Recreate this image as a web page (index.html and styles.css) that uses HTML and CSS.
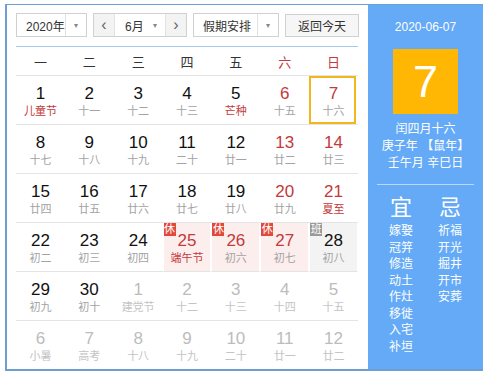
FILE: index.html
```html
<!DOCTYPE html>
<html lang="zh">
<head>
<meta charset="utf-8">
<link rel="stylesheet" href="styles.css">
</head>
<body>
<div class="cal">
  <div class="main">
    <div class="toolbar">
      <div class="sel year"><span class="sel-text">2020年</span><span class="caret">&#9662;</span></div>
      <div class="month-group">
        <span class="nav">&lsaquo;</span>
        <div class="sel month"><span class="sel-text">6月</span><span class="caret">&#9662;</span></div>
        <span class="nav">&rsaquo;</span>
      </div>
      <div class="sel holiday"><span class="sel-text">假期安排</span><span class="caret">&#9662;</span></div>
      <button class="today-btn">返回今天</button>
    </div>
    <div class="weekdays">
      <span>一</span><span>二</span><span>三</span><span>四</span><span>五</span><span class="wk">六</span><span class="wk">日</span>
    </div>
    <div class="grid">
      <div class="day"><b>1</b><i class="fest">儿童节</i></div>
      <div class="day"><b>2</b><i>十一</i></div>
      <div class="day"><b>3</b><i>十二</i></div>
      <div class="day"><b>4</b><i>十三</i></div>
      <div class="day"><b>5</b><i class="fest">芒种</i></div>
      <div class="day wk"><b>6</b><i>十五</i></div>
      <div class="day wk today"><b>7</b><i>十六</i></div>

      <div class="day"><b>8</b><i>十七</i></div>
      <div class="day"><b>9</b><i>十八</i></div>
      <div class="day"><b>10</b><i>十九</i></div>
      <div class="day"><b>11</b><i>二十</i></div>
      <div class="day"><b>12</b><i>廿一</i></div>
      <div class="day wk"><b>13</b><i>廿二</i></div>
      <div class="day wk"><b>14</b><i>廿三</i></div>

      <div class="day"><b>15</b><i>廿四</i></div>
      <div class="day"><b>16</b><i>廿五</i></div>
      <div class="day"><b>17</b><i>廿六</i></div>
      <div class="day"><b>18</b><i>廿七</i></div>
      <div class="day"><b>19</b><i>廿八</i></div>
      <div class="day wk"><b>20</b><i>廿九</i></div>
      <div class="day wk"><b>21</b><i class="fest">夏至</i></div>

      <div class="day"><b>22</b><i>初二</i></div>
      <div class="day"><b>23</b><i>初三</i></div>
      <div class="day"><b>24</b><i>初四</i></div>
      <div class="day rest"><span class="badge">休</span><b>25</b><i class="fest">端午节</i></div>
      <div class="day rest"><span class="badge">休</span><b>26</b><i>初六</i></div>
      <div class="day rest"><span class="badge">休</span><b>27</b><i>初七</i></div>
      <div class="day work"><span class="badge">班</span><b>28</b><i>初八</i></div>

      <div class="day"><b>29</b><i>初九</i></div>
      <div class="day"><b>30</b><i>初十</i></div>
      <div class="day other"><b>1</b><i>建党节</i></div>
      <div class="day other"><b>2</b><i>十二</i></div>
      <div class="day other"><b>3</b><i>十三</i></div>
      <div class="day other"><b>4</b><i>十四</i></div>
      <div class="day other"><b>5</b><i>十五</i></div>

      <div class="day other"><b>6</b><i>小暑</i></div>
      <div class="day other"><b>7</b><i>高考</i></div>
      <div class="day other"><b>8</b><i>十八</i></div>
      <div class="day other"><b>9</b><i>十九</i></div>
      <div class="day other"><b>10</b><i>二十</i></div>
      <div class="day other"><b>11</b><i>廿一</i></div>
      <div class="day other"><b>12</b><i>廿二</i></div>
    </div>
  </div>
  <aside class="side">
    <div class="side-date">2020-06-07</div>
    <div class="big-day">7</div>
    <div class="lunar">
      <div>闰四月十六</div>
      <div>庚子年 【鼠年】</div>
      <div>壬午月 辛巳日</div>
    </div>
    <div class="sep"></div>
    <div class="yiji">
      <div class="col">
        <div class="head">宜</div>
        <div>嫁娶</div><div>冠笄</div><div>修造</div><div>动土</div><div>作灶</div><div>移徙</div><div>入宅</div><div>补垣</div>
      </div>
      <div class="col">
        <div class="head">忌</div>
        <div>祈福</div><div>开光</div><div>掘井</div><div>开市</div><div>安葬</div>
      </div>
    </div>
  </aside>
</div>
</body>
</html>
```

FILE: styles.css
```css
* { box-sizing: border-box; }
html, body { margin: 0; padding: 0; background: #fff; }
body {
  font-family: "Liberation Sans", "Noto Sans CJK SC", sans-serif;
  color: #222;
}
.cal {
  display: flex;
  margin: 4px 0 0 5px;
  width: 478px;
  height: 367px;
  border: 1px solid #6d9fd3;
  border-width: 1px 0 2px 2px;
}
.main {
  width: 361px;
  padding: 8px 0 0 9px;
}
.toolbar {
  display: flex;
  align-items: center;
  height: 24px;
  font-size: 12px;
  color: #333;
}
.sel {
  display: flex;
  align-items: stretch;
  height: 24px;
  border: 1px solid #d0d0d0;
  background: #fff;
}
.sel-text {
  display: flex;
  align-items: center;
  padding-left: 9px;
  flex: 1;
  white-space: nowrap;
}
.caret {
  display: flex;
  align-items: center;
  justify-content: center;
  width: 21px;
  flex: none;
  border-left: 1px solid #e2e2e2;
  font-size: 8px;
  color: #888;
}
.year { width: 71px; }
.month-group {
  display: flex;
  height: 24px;
  margin-left: 6px;
  border: 1px solid #d0d0d0;
}
.nav {
  width: 20px;
  display: flex;
  align-items: center;
  justify-content: center;
  background: #f3f3f3;
  font-size: 16px;
  color: #666;
}
.month { width: 52px; height: 22px; border-width: 0 1px; border-color: #e2e2e2; }
.month .sel-text { padding-left: 10px; }
.month .caret { border-left: 0; border-right: 0; }
.holiday { width: 86px; margin-left: 6px; }
.today-btn {
  margin-left: 6px;
  width: 74px;
  height: 23px;
  border: 1px solid #d0d0d0;
  background: #f6f6f6;
  font: inherit;
  color: #333;
  padding: 0;
}
.weekdays {
  margin-top: 9px;
  width: 342px;
  border-top: 1px solid #a9c9ec;
  border-bottom: 1px solid #e4e4e4;
  height: 30px;
  display: grid;
  grid-template-columns: repeat(7, 1fr);
  align-items: center;
  text-align: center;
  font-size: 13px;
  color: #333;
}
.weekdays .wk { color: #c23a3a; }
.grid {
  width: 342px;
  display: grid;
  grid-template-columns: repeat(7, 1fr);
  grid-auto-rows: 49px;
}
.day {
  position: relative;
  border-bottom: 1px solid #e4e4e4;
  display: flex;
  flex-direction: column;
  align-items: center;
  padding-top: 8px;
}
.grid .day:nth-last-child(-n+7) { border-bottom: 0; }
.day b {
  font-weight: normal;
  font-size: 17px;
  line-height: 20px;
  color: #111;
}
.day i {
  font-style: normal;
  font-size: 11px;
  line-height: 15px;
  color: #a3a3a3;
}
.day i.fest { color: #c23a3a; }
.day.wk b { color: #c23a3a; }
.day.other b { color: #bcbcbc; }
.day.other i { color: #c4c4c4; }
.today::after {
  content: "";
  position: absolute;
  left: 0; top: 0; right: 2px; bottom: 0;
  border: 2px solid #f0b81c;
}
.rest, .work {
  background-clip: padding-box;
  border-left: 1px solid #fff;
  border-right: 1px solid #fff;
}
.rest { background-color: #fdeeee; }
.work { background-color: #f3f3f3; }
.rest b { color: #c23a3a; }
.badge {
  position: absolute;
  left: 0; top: 0;
  width: 12px; height: 13px;
  font-size: 11px;
  line-height: 13px;
  text-align: center;
  color: #fff;
  background: #e2493c;
}
.work .badge { background: #9a9a9a; }
.side {
  width: 115px;
  background: #64aaf6;
  color: #fff;
  display: flex;
  flex-direction: column;
  align-items: center;
  padding-top: 13px;
}
.side-date { font-size: 12px; line-height: 18px; }
.big-day {
  margin-top: 13px;
  width: 65px;
  height: 65px;
  background: #ffb703;
  font-size: 45px;
  font-weight: 300;
  line-height: 65px;
  text-align: center;
}
.lunar {
  margin-top: 7px;
  font-size: 12px;
  line-height: 17px;
  text-align: center;
}
.sep {
  margin-top: 12px;
  width: 97px;
  border-top: 1px solid rgba(255,255,255,0.55);
}
.yiji {
  display: flex;
  margin-top: 10px;
}
.col {
  width: 49px;
  text-align: center;
  font-size: 12px;
  line-height: 16.5px;
}
.col .head {
  font-size: 22px;
  line-height: 26px;
  margin-bottom: 2px;
}
```
